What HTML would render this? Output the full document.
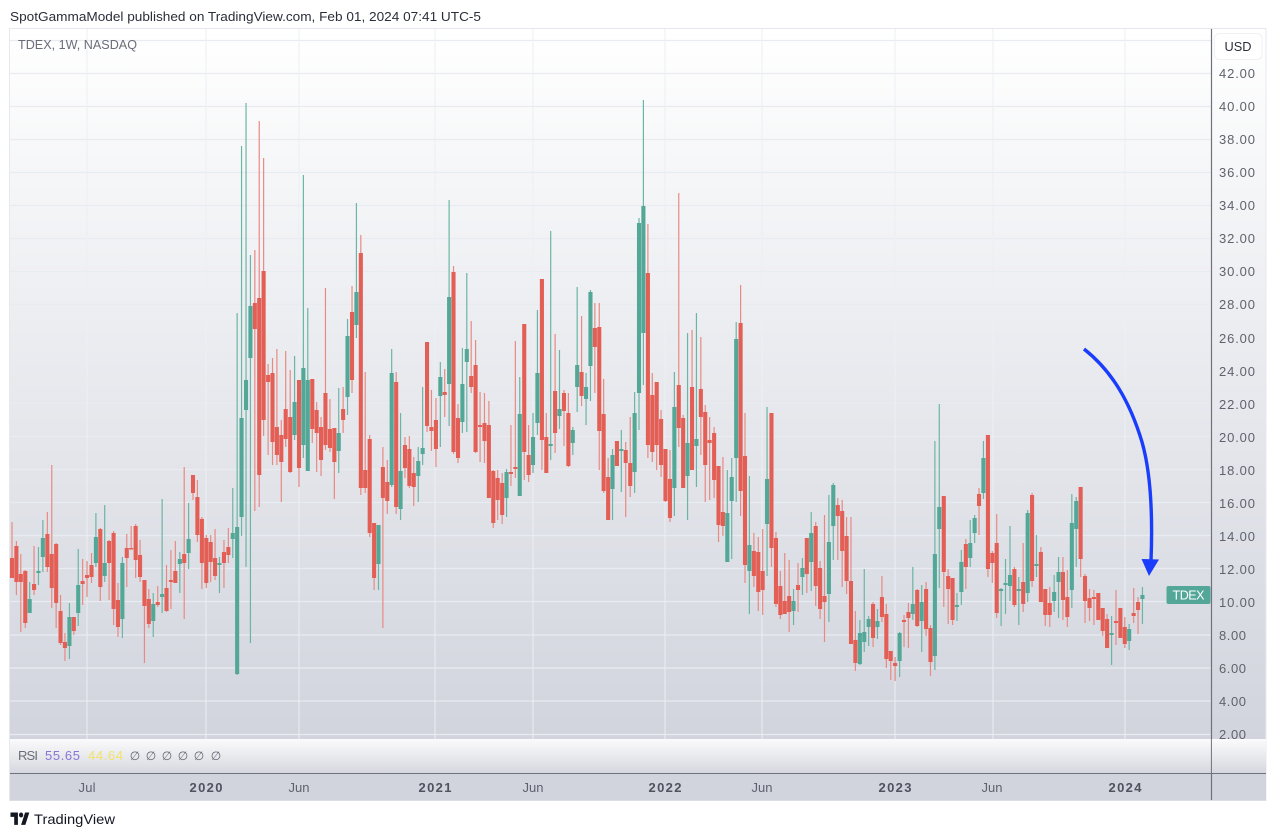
<!DOCTYPE html>
<html lang="en">
<head>
<meta charset="utf-8">
<title>TDEX, 1W, NASDAQ</title>
<style>
html,body{margin:0;padding:0;background:#fff;width:1280px;height:834px;overflow:hidden}
svg{display:block}
text{font-family:"Liberation Sans",sans-serif}
</style>
</head>
<body>
<svg xmlns="http://www.w3.org/2000/svg" width="1280" height="834" viewBox="0 0 1280 834">
<defs>
<linearGradient id="bg" x1="0" y1="29" x2="0" y2="740" gradientUnits="userSpaceOnUse"><stop offset="0" stop-color="#ffffff"/><stop offset="1" stop-color="#d1d4dd"/></linearGradient>
<linearGradient id="rsi" x1="0" y1="739" x2="0" y2="773" gradientUnits="userSpaceOnUse"><stop offset="0" stop-color="#fbfbfc"/><stop offset="1" stop-color="#d6d8df"/></linearGradient>
</defs>
<rect width="1280" height="834" fill="#fff"/>
<text x="10" y="21" font-size="13" fill="#2a2e39" textLength="471" lengthAdjust="spacingAndGlyphs">SpotGammaModel published on TradingView.com, Feb 01, 2024 07:41 UTC-5</text>
<rect x="10" y="29" width="1256" height="711" fill="url(#bg)"/>
<rect x="9.5" y="28.5" width="1256.5" height="772" fill="none" stroke="#e6e8ee" stroke-width="1"/>
<path d="M10 40.5H1211M10 73.5H1211M10 106.5H1211M10 139.5H1211M10 172.5H1211M10 205.5H1211M10 238.5H1211M10 271.5H1211M10 304.5H1211M10 337.5H1211M10 370.5H1211M10 403.5H1211M10 436.5H1211M10 469.5H1211M10 502.5H1211M10 535.5H1211M10 568.5H1211M10 601.5H1211M10 635H1211M10 668H1211M10 701H1211M10 734.5H1211" fill="none" stroke="#e8ecf1" stroke-width="1.2"/>
<path d="M87 29V739M206 29V739M299 29V739M435 29V739M533 29V739M665 29V739M762 29V739M895 29V739M993 29V739M1125 29V739" fill="none" stroke="#ebeff3" stroke-width="1"/>
<text x="18" y="49" font-size="13" fill="#6a6d78" textLength="119" lengthAdjust="spacingAndGlyphs">TDEX, 1W, NASDAQ</text>
<g transform="translate(0.013 0) scale(.9989 1)" fill="none">
<path stroke="#6cb5a5" stroke-width="1.2" d="M29.7 582V613M38.5 547V585M42.9 520V572M69.5 603V659M78.3 549V626M96 513V567M104.8 505V582M122.5 557V638M153.4 593V637M162.3 499V613M180 552V593M188.8 503V569M219.7 557V593M233 488V558M237.4 313V675M241.8 146V536M246.3 103V567M250.7 255V643M294.9 356V440M303.7 175V458M308.1 308V471M339.1 388V473M347.9 319V415M356.8 203V338M378.9 525V590M392.1 349V487M401 413V520M418.7 447V502M423.1 387V465M440.8 362V447M449.6 200V426M462.9 348V433M467.3 273V432M507.1 469V517M520.3 377V496M533.6 413V473M538 310V435M551.3 231V460M560.1 350V429M573.4 427V455M577.8 287V412M586.7 373V425M591.1 290V401M613.2 449V520M622 430V492M635.3 392V493M639.7 218V430M644.1 100V385M675.1 372V516M688.3 333V520M697.2 313V487M728.1 470V562M732.5 458V559M737 322V502M750.2 476V614M767.9 407V576M794.4 589V625M803.3 558V595M812.1 512V591M829.8 495V622M834.2 483V560M860.8 620V665M865.2 569V652M869.6 616V646M878.4 609V639M900.6 632V677M913.8 567V620M922.7 585V652M935.9 441V670M940.3 404V588M958 593V621M962.4 550V605M971.3 520V567M975.7 515V543M984.5 441V499M1002.2 588V626M1006.6 559V614M1011.1 526V601M1019.9 577V625M1028.8 510V602M1037.6 535V577M1055.3 575V612M1059.7 557V618M1073 494V608M1077.4 497V567M1112.8 616V665M1130.4 624V650M1143.7 587V624"/>
<path stroke="#e88a83" stroke-width="1.2" d="M12 522V578M16.4 541V595M20.8 554V632M25.3 570V628M34.1 546V595M47.4 512V572M51.8 465V608M56.2 543V628M60.6 595V645M65 633V661M73.9 617V635M82.7 559V605M87.1 561V597M91.6 553V583M100.4 528V601M109.2 540V600M113.7 531V625M118.1 583V637M126.9 534V587M131.3 526V549M135.8 524V578M140.2 540V582M144.6 580V663M149 589V628M157.9 586V607M166.7 565V612M171.1 550V609M175.5 541V583M184.4 467V619M193.2 475V500M197.6 480V542M202.1 517V589M206.5 535V588M210.9 535V582M215.3 529V580M224.2 540V588M228.6 528V563M255.1 250V511M259.5 121V507M263.9 158V436M268.4 364V455M272.8 358V465M277.2 349V465M281.6 420V502M286 351V447M290.5 370V473M299.3 380V487M312.6 379V443M317 402V472M321.4 417V476M325.8 288V450M330.3 399V452M334.7 428V499M343.5 387V433M352.4 286V393M361.2 235V495M365.6 372V493M370.1 435V537M374.5 523V590M383.3 447V628M387.7 460V514M396.6 372V514M405.4 437V478M409.8 436V488M414.2 457V506M427.5 342V432M431.9 390V451M436.4 398V467M445.2 369V417M454 266V454M458.5 404V463M471.7 321V393M476.1 340V453M480.6 392V462M485 393V463M489.4 401V498M493.8 470V528M498.2 470V520M502.7 473V524M511.5 425V486M515.9 341V478M524.8 324V480M529.2 425V482M542.5 279V470M546.9 413V473M555.7 334V453M564.6 390V446M569 393V467M582.2 316V406M595.5 303V393M599.9 303V470M604.3 379V493M608.8 458V520M617.6 441V466M626.4 442V517M630.9 417V497M648.6 224V458M653 373V462M657.4 382V470M661.8 410V477M666.2 449V502M670.7 450V522M679.5 193V447M683.9 415V488M692.8 330V470M701.6 337V455M706 405V502M710.4 417V500M714.9 427V498M719.3 466V542M723.7 457V536M741.4 285V516M745.8 413V583M754.7 533V587M759.1 537V611M763.5 529V615M772.3 413V567M776.8 532V607M781.2 571V619M785.6 553V614M790 560V632M798.9 563V612M807.7 538V593M816.6 522V606M821 561V619M825.4 515V642M838.7 498V560M843.1 500V587M847.5 517V594M851.9 517V644M856.3 611V671M874 602V647M882.9 576V622M887.3 604V668M891.7 651V680M896.1 657V681M905 615V647M909.4 603V648M918.2 589V627M927.1 582V636M931.5 625V676M944.8 496V607M949.2 569V624M953.6 578V625M966.9 539V589M980.1 488V535M989 435V577M993.4 551V583M997.8 514V618M1015.5 567V607M1024.3 543V612M1033.2 493V587M1042 547V602M1046.4 589V626M1050.9 587V627M1064.1 557V620M1068.5 570V627M1081.8 487V577M1086.2 574V623M1090.7 589V621M1095.1 590V625M1099.5 593V620M1103.9 608V636M1108.3 614V648M1117.2 590V645M1121.6 608V638M1126 617V648M1134.9 588V623M1139.3 597V634"/>
<path stroke="#52a797" stroke-width="4.1" d="M29.7 599V613M38.5 571V573M42.9 538V557M69.5 617V646M78.3 585V613M96 537V563M104.8 563V576M122.5 563V619M153.4 604V621M162.3 594V597M180 559V564M188.8 539V553M219.7 563V565M233 533V539M237.4 527V674M241.8 418V517M246.3 380V410M250.7 306V358M294.9 402V435M303.7 368V445M308.1 380V471M339.1 433V451M347.9 336V397M356.8 292V325M378.9 525V564M392.1 373V485M401 471V509M418.7 461V476M423.1 448V454M440.8 377V396M449.6 297V384M462.9 384V422M467.3 349V362M507.1 472V498M520.3 414V496M533.6 437V465M538 373V423M551.3 444V446M560.1 409V416M573.4 430V443M577.8 365V387M586.7 387V399M591.1 292V366M613.2 455V489M622 449V451M635.3 413V472M639.7 223V393M644.1 206V333M675.1 407V488M688.3 443V476M697.2 439V446M728.1 513V562M732.5 477V501M737 339V458M750.2 545V571M767.9 479V524M794.4 601V611M803.3 568V577M812.1 533V562M829.8 542V594M834.2 485V526M860.8 633V664M865.2 632V642M869.6 619V627M878.4 621V627M900.6 633V661M913.8 604V614M922.7 602V621M935.9 554V656M940.3 507V529M958 605V607M962.4 562V592M971.3 543V558M975.7 518V533M984.5 458V493M1002.2 589V591M1006.6 583V585M1011.1 575V586M1019.9 589V591M1028.8 513V593M1037.6 564V566M1055.3 592V601M1059.7 572V582M1073 523V590M1077.4 501V529M1112.8 633V635M1130.4 629V641M1143.7 595V599"/>
<path stroke="#e35f55" stroke-width="4.1" d="M12 558V578M16.4 546V582M20.8 574V582M25.3 571V623M34.1 584V590M47.4 534V567M51.8 554V588M56.2 544V603M60.6 611V643M65 642V648M73.9 617V631M82.7 581V584M87.1 575V578M91.6 565V577M100.4 529V587M109.2 541V563M113.7 533V609M118.1 600V627M126.9 548V558M131.3 548V549.5M135.8 526V560M140.2 555V577M144.6 580V606M149 599V624M157.9 602V605M166.7 588V611M171.1 580V582M175.5 571V583M184.4 554V563M193.2 475V493M197.6 497V535M202.1 519V563M206.5 538V583M210.9 542V562M215.3 558V576M224.2 552V563M228.6 547V555M255.1 303V329M259.5 298V475M263.9 271V420M268.4 375V382M272.8 373V442M277.2 427V455M281.6 435V462M286 409V439M290.5 417V472M299.3 380V468M312.6 379V429M317 410V433M321.4 427V460M325.8 393V445M330.3 429V448M334.7 428V462M343.5 409V420M352.4 312V380M361.2 253V488M365.6 470V488M370.1 439V533M374.5 523V578M383.3 467V498M387.7 482V501M396.6 382V507M405.4 445V468M409.8 449V486M414.2 473V487M427.5 342V426M431.9 427V431M436.4 420V449M445.2 392V395M454 272V452M458.5 418V458M471.7 376V387M476.1 365V452M480.6 425V427M485 423V441M489.4 425V498M493.8 471V523M498.2 478V500M502.7 483V515M511.5 472V474M515.9 467V469M524.8 324V452M529.2 455V475M542.5 279V440M546.9 437V473M555.7 391V433M564.6 393V411M569 413V466M582.2 372V396M595.5 328V347M599.9 327V431M604.3 414V491M608.8 477V520M617.6 441V466M626.4 450V463M630.9 463V486M648.6 273V445M653 395V452M657.4 382V445M661.8 419V465M666.2 449V501M670.7 479V518M679.5 385V428M683.9 418V488M692.8 387V470M701.6 389V417M706 412V465M710.4 440V443M714.9 433V480M719.3 466V525M723.7 512V526M741.4 323V491M745.8 456V565M754.7 551V576M759.1 552V592M763.5 571V590M772.3 413V548M776.8 538V604M781.2 586V615M785.6 601V614M790 596V612M798.9 585V590M807.7 538V574M816.6 526V586M821 568V609M825.4 596V602M838.7 505V516M843.1 511V551M847.5 536V581M851.9 581V644M856.3 640V663M874 604V638M882.9 597V617M887.3 614V659M891.7 651V661M896.1 663V666M905 620V622M909.4 612V618M918.2 590V626M927.1 589V629M931.5 628V662M944.8 496V572M949.2 576V589M953.6 578V620M966.9 544V567M980.1 494V506M989 435V569M993.4 553V563M997.8 543V613M1015.5 569V605M1024.3 582V604M1033.2 495V581M1042 552V602M1046.4 589V615M1050.9 603V615M1064.1 572V600M1068.5 597V617M1081.8 487V559M1086.2 576V601M1090.7 598V608M1095.1 597V599M1099.5 593V620M1103.9 608V631M1108.3 619V648M1117.2 621V623M1121.6 608V638M1126 627V644M1134.9 613V616M1139.3 602V610"/>
</g>
<path d="M1084 349C1112 371 1130 402 1142 442C1150 470 1153 510 1151 561" fill="none" stroke="#1a3dfb" stroke-width="3.4"/>
<path d="M1141.5 559L1159 559.5L1149 576Z" fill="#1a3dfb"/>
<rect x="10" y="739" width="1256" height="34" fill="url(#rsi)"/>
<rect x="10" y="773" width="1256" height="27.5" fill="#d1d4dc"/>
<path d="M10 773.5H1266" stroke="#6f727c" stroke-width="1"/>
<path d="M1211.5 29V800" stroke="#6f727c" stroke-width="1.2"/>
<rect x="1214.5" y="33.5" width="47.5" height="26" rx="5" fill="#fff" stroke="#f0f1f4"/>
<text x="1238" y="51" font-size="13" fill="#2a2e39" text-anchor="middle" textLength="27" lengthAdjust="spacingAndGlyphs">USD</text>
<g font-size="13" fill="#5f626d" text-anchor="start">
<text x="1219" y="78" textLength="36">42.00</text><text x="1219" y="111" textLength="36">40.00</text><text x="1219" y="144" textLength="36">38.00</text><text x="1219" y="177" textLength="36">36.00</text><text x="1219" y="210" textLength="36">34.00</text><text x="1219" y="243" textLength="36">32.00</text><text x="1219" y="276" textLength="36">30.00</text><text x="1219" y="309" textLength="36">28.00</text><text x="1219" y="343" textLength="36">26.00</text><text x="1219" y="376" textLength="36">24.00</text><text x="1219" y="409" textLength="36">22.00</text><text x="1219" y="442" textLength="36">20.00</text><text x="1219" y="475" textLength="36">18.00</text><text x="1219" y="508" textLength="36">16.00</text><text x="1219" y="541" textLength="36">14.00</text><text x="1219" y="574" textLength="36">12.00</text><text x="1219" y="607" textLength="36">10.00</text><text x="1219" y="640" textLength="27">8.00</text><text x="1219" y="673" textLength="27">6.00</text><text x="1219" y="706" textLength="27">4.00</text>
<text x="1219" y="739" textLength="27">2.00</text>
</g>
<rect x="1211.9" y="739.2" width="54" height="33.6" fill="url(#rsi)"/>
<rect x="1166.5" y="586" width="44" height="18" rx="2" fill="#53a798"/>
<text x="1188.5" y="599.5" font-size="12.5" fill="#fff" text-anchor="middle" textLength="32" lengthAdjust="spacing">TDEX</text>
<text x="18" y="760" font-size="13" fill="#6a6d78" textLength="20">RSI</text>
<text x="45" y="760" font-size="13" fill="#8a74d6" textLength="35">55.65</text>
<text x="88" y="760" font-size="13" fill="#f3e26b" textLength="35">44.64</text>
<g font-size="12" fill="#62656f" text-anchor="middle" style="font-family:'DejaVu Sans',sans-serif">
<text x="135" y="760" style="font-family:'DejaVu Sans',sans-serif">∅</text><text x="151" y="760" style="font-family:'DejaVu Sans',sans-serif">∅</text><text x="167" y="760" style="font-family:'DejaVu Sans',sans-serif">∅</text><text x="183" y="760" style="font-family:'DejaVu Sans',sans-serif">∅</text><text x="199" y="760" style="font-family:'DejaVu Sans',sans-serif">∅</text><text x="216" y="760" style="font-family:'DejaVu Sans',sans-serif">∅</text>
</g>
<g font-size="13" fill="#5f626d" text-anchor="middle">
<text x="87" y="792" textLength="17">Jul</text>
<text x="299" y="792" textLength="21">Jun</text>
<text x="533" y="792" textLength="21">Jun</text>
<text x="762" y="792" textLength="21">Jun</text>
<text x="992" y="792" textLength="21">Jun</text>
</g>
<g font-size="13" font-weight="700" fill="#50535e" text-anchor="middle">
<text x="206" y="792" textLength="33">2020</text>
<text x="435" y="792" textLength="33">2021</text>
<text x="665" y="792" textLength="33">2022</text>
<text x="895" y="792" textLength="33">2023</text>
<text x="1125" y="792" textLength="33">2024</text>
</g>
<g transform="translate(10.5 810) scale(.53 .62)" fill="#131722">
<path d="M14 24H7V11H0V4h14v20zM28 24h-8l7.5-20h8L28 24z"/><circle cx="20" cy="8" r="4"/>
</g>
<text x="34" y="824" font-size="14" fill="#131722" textLength="81" lengthAdjust="spacingAndGlyphs">TradingView</text>
</svg>
</body>
</html>
